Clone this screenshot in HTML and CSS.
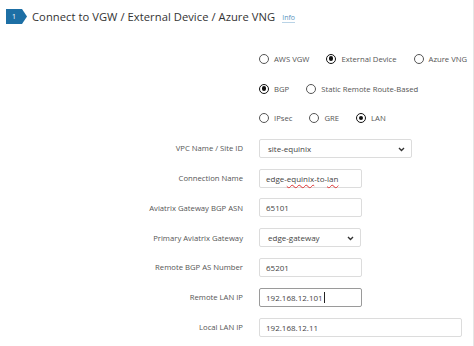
FILE: index.html
```html
<!DOCTYPE html>
<html lang="en">
<head>
    <meta charset="UTF-8">
    <title>Connect to VGW / External Device / Azure VNG</title>
    <link rel="stylesheet" href="styles.css">
</head>
<body>
<div class="panel">
    <div class="step-head">
        <span class="badge">
            <svg width="21" height="15" viewBox="0 0 21 15"><polygon points="0,0 16,0 21,7.5 16,15 0,15" fill="#1d6fa5"/></svg>
            <span class="badge-num">1</span>
        </span>
        <h3 class="title">Connect to VGW / External Device / Azure VNG</h3>
        <a class="info">Info</a>
    </div>

    <div class="form">
        <div class="label"></div>
        <div class="radios">
            <label class="radio"><span class="dot"></span>AWS VGW</label>
            <label class="radio on"><span class="dot"></span>External Device</label>
            <label class="radio"><span class="dot"></span>Azure VNG</label>
        </div>

        <div class="label"></div>
        <div class="radios">
            <label class="radio on"><span class="dot"></span>BGP</label>
            <label class="radio"><span class="dot"></span>Static Remote Route-Based</label>
        </div>

        <div class="label"></div>
        <div class="radios">
            <label class="radio"><span class="dot"></span>IPsec</label>
            <label class="radio"><span class="dot"></span>GRE</label>
            <label class="radio on"><span class="dot"></span>LAN</label>
        </div>

        <div class="label">VPC Name / Site ID</div>
        <div class="field select wide">site-equinix
            <svg class="chev" width="7" height="5" viewBox="0 0 7 5"><path d="M1 1 L3.5 3.5 L6 1" stroke="#333" stroke-width="1.4" fill="none"/></svg>
        </div>

        <div class="label">Connection Name</div>
        <div class="field">edge-<span class="misspell">equinix</span>-to-<span class="misspell">lan</span></div>

        <div class="label">Aviatrix Gateway BGP ASN</div>
        <div class="field">65101</div>

        <div class="label">Primary Aviatrix Gateway</div>
        <div class="field select">edge-gateway
            <svg class="chev" width="7" height="5" viewBox="0 0 7 5"><path d="M1 1 L3.5 3.5 L6 1" stroke="#333" stroke-width="1.4" fill="none"/></svg>
        </div>

        <div class="label">Remote BGP AS Number</div>
        <div class="field">65201</div>

        <div class="label">Remote LAN IP</div>
        <div class="field focus">192.168.12.101<span class="caret"></span></div>

        <div class="label">Local LAN IP</div>
        <div class="field full">192.168.12.11</div>
    </div>
</div>
</body>
</html>
```

FILE: styles.css
```css
* {
    padding: 0;
    margin: 0;
    box-sizing: border-box;
}

body {
    background: #fff;
    font-family: "Open Sans", "Liberation Sans", sans-serif;
    color: #444;
}

.panel {
    width: 474px;
    height: 346px;
    padding: 9px 0 0 6px;
    border-right: 1px solid #e6e6e6;
}

.step-head {
    display: flex;
    align-items: center;
    height: 15px;
}

.badge {
    position: relative;
    width: 21px;
    height: 15px;
    margin-right: 5px;
}

.badge svg {
    display: block;
}

.badge-num {
    position: absolute;
    left: 0;
    top: 0;
    width: 16px;
    line-height: 15px;
    text-align: center;
    color: #fff;
    font-size: 7px;
}

.title {
    font-weight: normal;
    font-size: 11.2px;
    color: #333;
    letter-spacing: 0.05px;
}

.info {
    margin-left: 7px;
    margin-top: 3px;
    font-size: 7px;
    color: #5b93bd;
    border-bottom: 1px solid #b9d3e6;
    line-height: 9px;
}

.form {
    display: grid;
    grid-template-columns: 237px 1fr;
    column-gap: 16px;
    grid-auto-rows: 29.8px;
    margin-top: 20px;
}

.label {
    display: flex;
    align-items: center;
    justify-content: flex-end;
    font-size: 7.7px;
    color: #555;
}

.radios {
    display: flex;
    align-items: center;
    gap: 17px;
    font-size: 7.7px;
    color: #555;
}

.radio {
    display: flex;
    align-items: center;
}

.dot {
    width: 10px;
    height: 10px;
    border: 1.3px solid #555;
    border-radius: 50%;
    margin-right: 5px;
    position: relative;
}

.radio.on .dot {
    border-color: #111;
}

.radio.on .dot:after {
    content: "";
    position: absolute;
    left: 1.5px;
    top: 1.5px;
    width: 4.4px;
    height: 4.4px;
    border-radius: 50%;
    background: #111;
}

.field {
    align-self: center;
    width: 103px;
    height: 19px;
    border: 1px solid #dcdcdc;
    border-radius: 2px;
    padding: 0 6px;
    font-size: 8px;
    color: #444;
    display: flex;
    align-items: center;
    position: relative;
}

.field.select {
    width: 102px;
    padding-left: 8px;
}

.field.select.wide {
    width: 153px;
}

.chev {
    position: absolute;
    right: 6px;
    top: 7px;
}

.field.full {
    width: 203px;
}

.field.focus {
    border-color: #9a9a9a;
}

.caret {
    display: inline-block;
    width: 1px;
    height: 11px;
    background: #222;
    margin-left: 1px;
}

.misspell {
    text-decoration: underline wavy #d33;
    text-decoration-thickness: 1px;
    text-underline-offset: 2px;
}
```
